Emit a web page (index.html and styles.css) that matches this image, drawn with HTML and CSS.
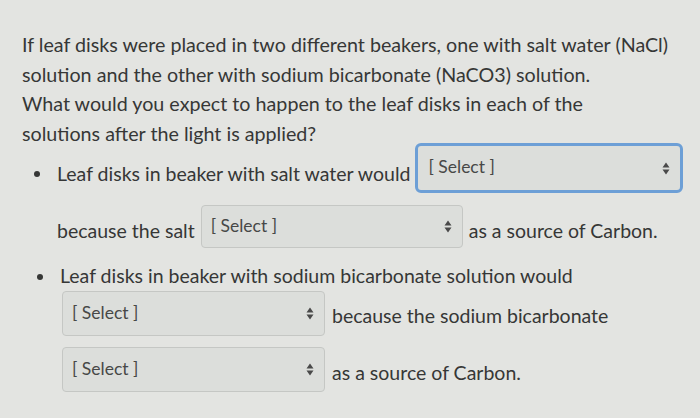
FILE: index.html
```html
<!DOCTYPE html>
<html lang="en">
<head>
<meta charset="UTF-8">
<meta name="viewport" content="width=device-width, initial-scale=1.0">
<title>Quiz Question</title>
<link rel="stylesheet" href="styles.css">
</head>
<body>
  <div class="question">
    <p class="prompt">If leaf disks were placed in two different beakers, one with salt water (NaCl)<br>solution and the other with sodium bicarbonate (NaCO3) solution.<br>What would you expect to happen to the leaf disks in each of the<br>solutions after the light is applied?</p>

    <div class="answers">
      <div class="item">
        <div class="row lead row-a">
          <span>Leaf disks in beaker with salt water would</span>
          <div class="select select-focus">
            <span class="placeholder">[ Select ]</span>
            <svg class="arrows" width="8" height="13" viewBox="0 0 8 13"><path d="M4 0.5 L7.5 5.5 L0.5 5.5 Z M4 12.5 L0.5 7.5 L7.5 7.5 Z" fill="#4a4a4a"/></svg>
          </div>
        </div>
        <div class="row row-b">
          <span>because the salt</span>
          <div class="select select-mid">
            <span class="placeholder">[ Select ]</span>
            <svg class="arrows" width="8" height="13" viewBox="0 0 8 13"><path d="M4 0.5 L7.5 5.5 L0.5 5.5 Z M4 12.5 L0.5 7.5 L7.5 7.5 Z" fill="#4a4a4a"/></svg>
          </div>
          <span>as a source of Carbon.</span>
        </div>
      </div>
      <div class="item item-second">
        <div class="row lead row-c">
          <span>Leaf disks in beaker with sodium bicarbonate solution would</span>
        </div>
        <div class="row row-d">
          <div class="select select-tall">
            <span class="placeholder">[ Select ]</span>
            <svg class="arrows" width="8" height="13" viewBox="0 0 8 13"><path d="M4 0.5 L7.5 5.5 L0.5 5.5 Z M4 12.5 L0.5 7.5 L7.5 7.5 Z" fill="#4a4a4a"/></svg>
          </div>
          <span>because the sodium bicarbonate</span>
        </div>
        <div class="row row-e">
          <div class="select select-tall">
            <span class="placeholder">[ Select ]</span>
            <svg class="arrows" width="8" height="13" viewBox="0 0 8 13"><path d="M4 0.5 L7.5 5.5 L0.5 5.5 Z M4 12.5 L0.5 7.5 L7.5 7.5 Z" fill="#4a4a4a"/></svg>
          </div>
          <span>as a source of Carbon.</span>
        </div>
      </div>
    </div>
  </div>
</body>
</html>
```

FILE: styles.css
```css
body {
  margin: 0;
  padding: 0;
  background-color: #e3e4e1; /* washed out grey page */
  font-family: Lato, "Open Sans", sans-serif;
  color: #363736;
}
.question {
  padding: 30px 0 0 22px;
}
.prompt {
  margin: 0;
  font-size: 19.7px;
  line-height: 29.5px;
  white-space: nowrap;
}
.answers {
  margin-top: -5px;
  padding-left: 35px;
  font-size: 19.5px;
  line-height: 29px;
  white-space: nowrap;
}
.row {
  display: flex;
  align-items: center;
  gap: 6px;
  position: relative;
}
.row.lead::before {
  content: "";
  position: absolute; /* bullet dot */
  left: -23px;
  top: 50%;
  width: 6px;
  height: 6px;
  margin-top: -2px;
  border-radius: 50%;
  background-color: #363736;
}
.row-a {
  gap: 5px;
}
.row-a .select {
  margin-bottom: 10px;
}
.row-b {
  margin-top: 2px;
}
.row-b .select {
  margin-bottom: 8px;
}
.item-second {
  padding-left: 3px;
}
.row-c {
  margin-top: 5px;
}
.row-d {
  margin-top: 1px;
}
.row-d .select {
  margin-bottom: 4px;
}
.row-e {
  margin-top: 7px;
}
.row-e .select {
  margin-bottom: 6px;
}
.select {
  display: flex;
  align-items: center;
  justify-content: space-between;
  box-sizing: border-box;
  background-color: #dcdedb;
  border: 1px solid #c5c7c4;
  border-radius: 4px;
  padding: 0 10px 0 9px;
  font-size: 17.5px;
  color: #474847;
}
.placeholder {
  margin-top: -3px;
}
.select-focus {
  width: 268px;
  height: 50px;
  border: 3px solid #6d9fd6; /* focused blue ring */
  border-radius: 6px;
  padding-left: 10px;
}
.select-mid {
  width: 262px;
  height: 43px;
}
.select-tall {
  width: 263px;
  height: 45px;
  margin-left: 2px;
  margin-right: 1px;
}
.arrows {
  flex-shrink: 0;
}
```
